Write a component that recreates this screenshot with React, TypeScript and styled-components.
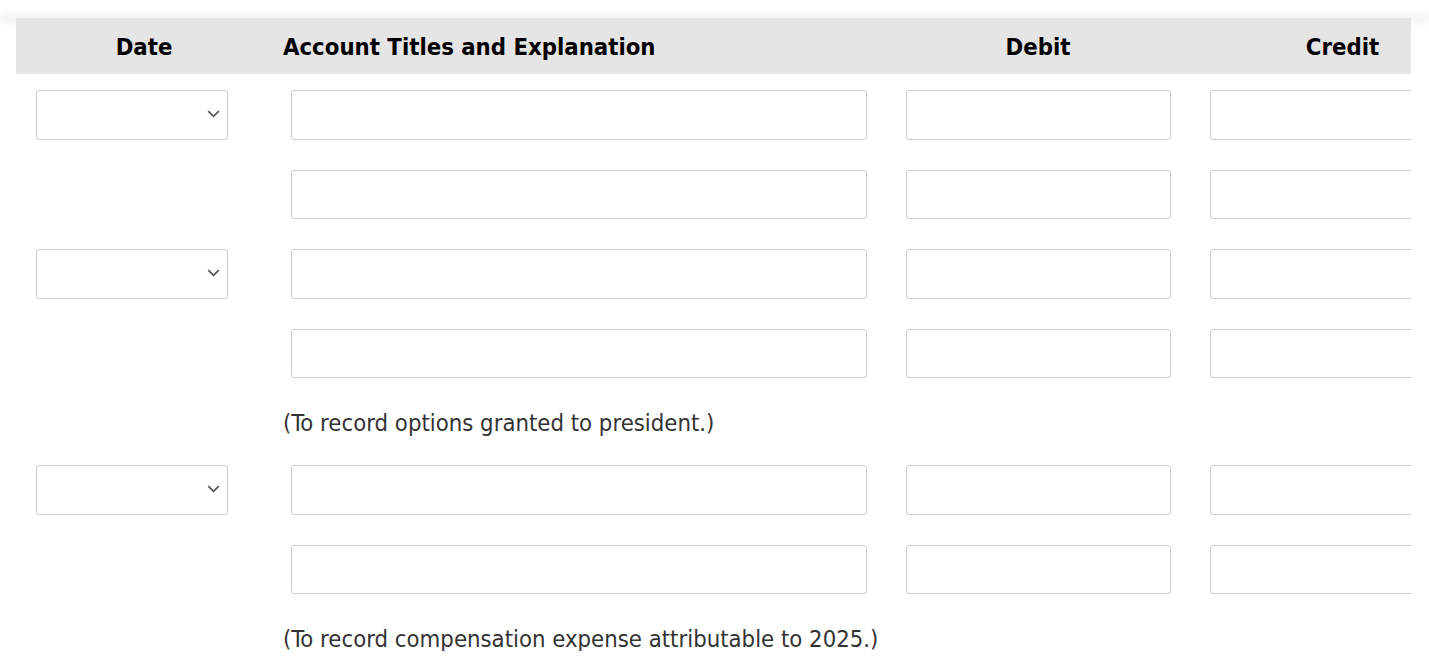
import React from 'react';
import styled, { createGlobalStyle } from 'styled-components';

const GlobalStyle = createGlobalStyle`
  html, body {
    margin: 0;
    padding: 0;
    background: #ffffff;
  }
  body {
    font-family: 'DejaVu Sans Condensed', 'DejaVu Sans', sans-serif;
    color: #333;
  }
`;

const TopShade = styled.div`
  height: 0;
  box-shadow: 0 0 10px 2px rgba(0, 0, 0, 0.12);
`;

const Frame = styled.div`
  margin: 18px 18px 0 16px;
  overflow: hidden;
`;

const Sheet = styled.div`
  display: grid;
  grid-template-columns: 256px 614px 304px 305px;
  width: 1480px;
`;

const HeadCell = styled.div<{ $align?: 'left' | 'center' }>`
  background: #e5e5e5;
  height: 56px;
  display: flex;
  align-items: center;
  justify-content: ${p => (p.$align === 'left' ? 'flex-start' : 'center')};
  padding-left: ${p => (p.$align === 'left' ? '11px' : '0')};
  padding-top: 2px;
  font-weight: bold;
  font-size: 23.7px;
  color: #000;
  box-sizing: border-box;
`;

const Cell = styled.div<{ $first?: boolean }>`
  padding-top: ${p => (p.$first ? '16px' : '30px')};
  display: flex;
  justify-content: center;
`;

const DateCell = styled(Cell)`
  justify-content: flex-start;
  padding-left: 20px;
`;

const AccountCell = styled(Cell)`
  justify-content: flex-start;
  padding-left: 19px;
`;

const SelectBox = styled.div`
  position: relative;
  width: 192px;
  height: 49.5px;
  border: 1px solid #cccccc;
  border-radius: 3px;
  box-sizing: border-box;
  background: #fff;

  svg {
    position: absolute;
    right: 7px;
    top: 19px;
    width: 13px;
    height: 8px;
  }
`;

const Field = styled.input<{ $w: number }>`
  width: ${p => p.$w}px;
  height: 49.5px;
  border: 1px solid #cccccc;
  border-radius: 3px;
  box-sizing: border-box;
  background: #fff;
  padding: 0 10px;
  font-size: 16px;
  outline: none;
`;

const Note = styled.div`
  grid-column: 2 / 5;
  padding: 30px 0 0 11px;
  font-size: 23.7px;
  line-height: 30px;
  color: #333;
  height: 57px;
  box-sizing: border-box;
`;

const Chevron = () => (
  <svg viewBox="0 0 13 8">
    <path d="M1.2 1.2 L6.5 6.3 L11.8 1.2" fill="none" stroke="#555" strokeWidth="1.7" />
  </svg>
);

type Line = { date: boolean };
type Entry = { lines: Line[]; note?: string };

const entries: Entry[] = [
  { lines: [{ date: true }, { date: false }] },
  { lines: [{ date: true }, { date: false }], note: '(To record options granted to president.)' },
  { lines: [{ date: true }, { date: false }], note: '(To record compensation expense attributable to 2025.)' },
];

const App: React.FC = () => {
  let rowIndex = 0;
  return (
    <>
      <GlobalStyle />
      <TopShade />
      <Frame>
        <Sheet>
          <HeadCell>Date</HeadCell>
          <HeadCell $align="left">Account Titles and Explanation</HeadCell>
          <HeadCell>Debit</HeadCell>
          <HeadCell>Credit</HeadCell>
          {entries.map((entry, ei) => (
            <React.Fragment key={ei}>
              {entry.lines.map((line, li) => {
                const isFirst = rowIndex === 0;
                rowIndex += 1;
                return (
                  <React.Fragment key={li}>
                    <DateCell $first={isFirst}>
                      {line.date && (
                        <SelectBox>
                          <Chevron />
                        </SelectBox>
                      )}
                    </DateCell>
                    <AccountCell $first={isFirst}>
                      <Field $w={576} />
                    </AccountCell>
                    <Cell $first={isFirst}>
                      <Field $w={265} />
                    </Cell>
                    <Cell $first={isFirst}>
                      <Field $w={265} />
                    </Cell>
                  </React.Fragment>
                );
              })}
              {entry.note && (
                <>
                  <div />
                  <Note>{entry.note}</Note>
                </>
              )}
            </React.Fragment>
          ))}
        </Sheet>
      </Frame>
    </>
  );
};

export default App;
